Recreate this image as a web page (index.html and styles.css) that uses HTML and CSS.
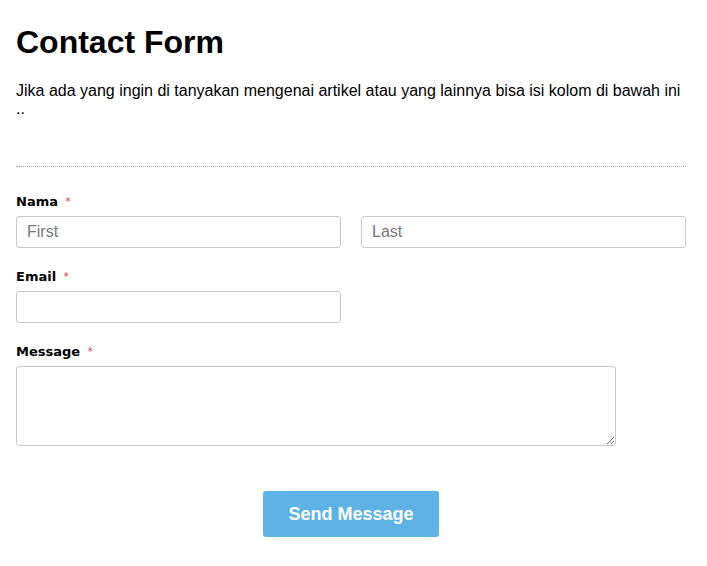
FILE: index.html
```html
<!DOCTYPE html>
<html lang="id">
<head>
    <meta charset="UTF-8">
    <meta name="viewport" content="width=device-width, initial-scale=1.0">
    <title>Contact Form</title>
    <link rel="stylesheet" href="styles.css">
</head>
<body>
    <div class="page">
        <h1 class="title">Contact Form</h1>
        <p class="intro">Jika ada yang ingin di tanyakan mengenai artikel atau yang lainnya bisa isi kolom di bawah ini ..</p>

        <hr class="divider">

        <form class="contact-form" onsubmit="return false;">
            <!-- Nama -->
            <div class="field">
                <label class="field-label">Nama <span class="req">*</span></label>
                <div class="name-row">
                    <input type="text" class="input" placeholder="First">
                    <input type="text" class="input" placeholder="Last">
                </div>
            </div>

            <!-- Email -->
            <div class="field">
                <label class="field-label">Email <span class="req">*</span></label>
                <input type="email" class="input input-half">
            </div>

            <!-- Message -->
            <div class="field">
                <label class="field-label">Message <span class="req">*</span></label>
                <textarea class="input textarea"></textarea>
            </div>

            <div class="actions">
                <button type="submit" class="btn-send">Send Message</button>
            </div>
        </form>
    </div>
</body>
</html>
```

FILE: styles.css
```css
body {
    margin: 0;
    background: #fff;
    font-family: "Liberation Sans", Arial, sans-serif;
    color: #000;
}

.page {
    padding: 24px 21px 0 16px;
}

.title {
    font-size: 32px;
    font-weight: bold;
    margin: 0 0 21px;
}

.intro {
    font-size: 16px;
    margin: 0;
}

.divider {
    border: 0;
    border-top: 1px dotted #a8a8a8;
    margin: 48px 0 27px;
}

.field {
    margin-bottom: 21px;
}

.field-label {
    display: block;
    font-family: "DejaVu Sans", Verdana, sans-serif;
    font-size: 13px;
    font-weight: bold;
    line-height: 16px;
    margin-bottom: 6px;
}

.req {
    color: #e3363b;
    font-size: 10px;
    font-weight: normal;
    margin-left: 3px;
    vertical-align: 1px;
}

.name-row {
    display: grid;
    grid-template-columns: 1fr 1fr;
    gap: 20px;
}

.input {
    box-sizing: border-box;
    display: block;
    width: 100%;
    height: 32px;
    padding: 0 10px;
    border: 1px solid #c8c8c8;
    border-radius: 3px;
    font-family: "Liberation Sans", Arial, sans-serif;
    font-size: 16px;
    color: #333;
    background: #fff;
}

.input::placeholder {
    color: #777;
}

.input-half {
    width: 325px;
}

.textarea {
    width: 600px;
    height: 80px;
    resize: both;
}

.actions {
    display: flex;
    justify-content: center;
    margin-top: 45px;
}

.btn-send {
    width: 176px;
    height: 46px;
    border: 0;
    border-radius: 3px;
    background: #5db3e6;
    color: #fff;
    font-family: "Liberation Sans", Arial, sans-serif;
    font-size: 18px;
    font-weight: bold;
    cursor: pointer;
}
```
